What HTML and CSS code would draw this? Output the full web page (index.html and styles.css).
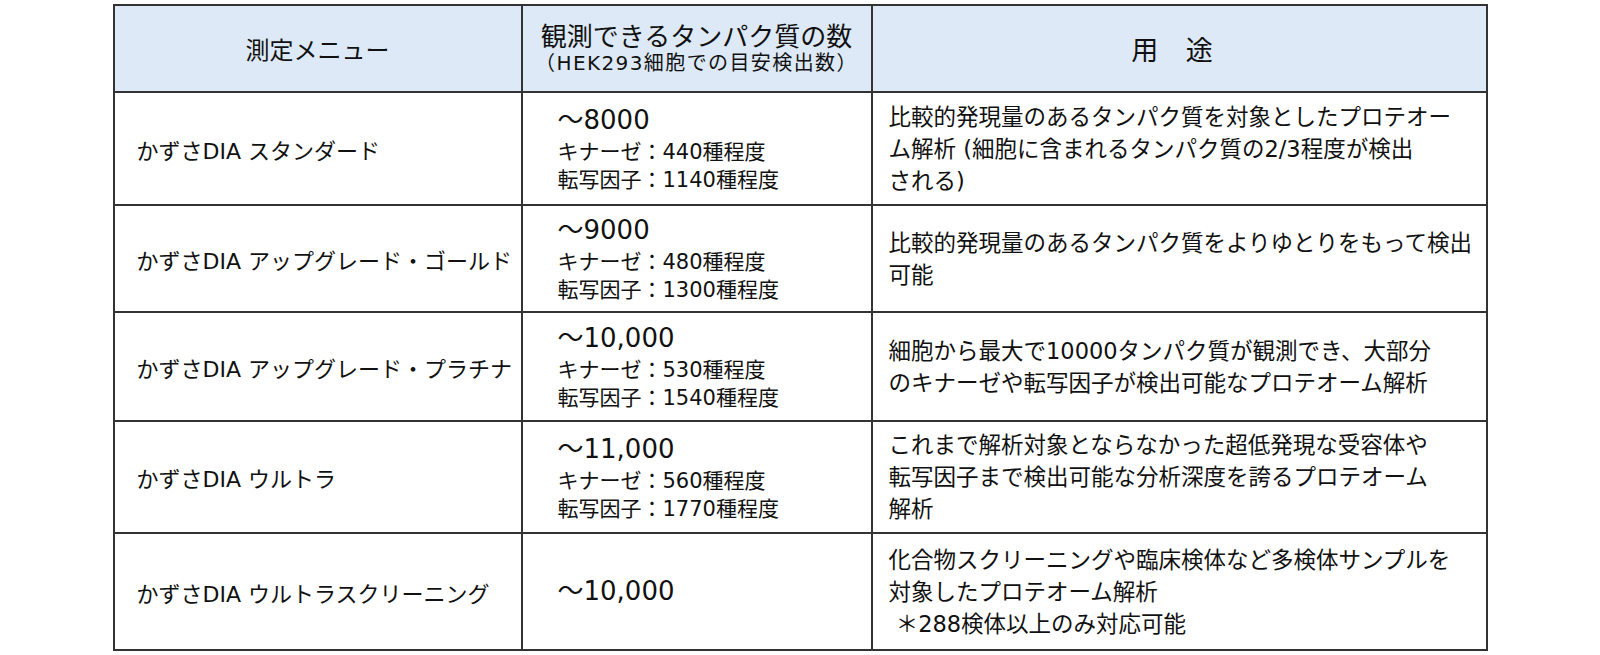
FILE: index.html
```html
<!DOCTYPE html>
<html lang="ja">
<head>
<meta charset="utf-8">
<link rel="stylesheet" href="styles.css">
</head>
<body>
<table class="menu">
  <colgroup>
    <col class="c1"><col class="c2"><col class="c3">
  </colgroup>
  <thead>
    <tr class="head">
      <th>測定メニュー</th>
      <th><div class="ht">観測できるタンパク質の数</div><div class="hs">（HEK293細胞での目安検出数）</div></th>
      <th class="yoto">用 途</th>
    </tr>
  </thead>
  <tbody>
    <tr class="r1">
      <td class="name">かずさDIA スタンダード</td>
      <td class="num"><div class="big">～8000</div><div class="sm">キナーゼ：440種程度</div><div class="sm">転写因子：1140種程度</div></td>
      <td class="use">比較的発現量のあるタンパク質を対象としたプロテオー<br>ム解析 (細胞に含まれるタンパク質の2/3程度が検出<br>される)</td>
    </tr>
    <tr class="r2">
      <td class="name">かずさDIA アップグレード・ゴールド</td>
      <td class="num"><div class="big">～9000</div><div class="sm">キナーゼ：480種程度</div><div class="sm">転写因子：1300種程度</div></td>
      <td class="use">比較的発現量のあるタンパク質をよりゆとりをもって検出<br>可能</td>
    </tr>
    <tr class="r3">
      <td class="name">かずさDIA アップグレード・プラチナ</td>
      <td class="num"><div class="big">～10,000</div><div class="sm">キナーゼ：530種程度</div><div class="sm">転写因子：1540種程度</div></td>
      <td class="use">細胞から最大で10000タンパク質が観測でき、大部分<br>のキナーゼや転写因子が検出可能なプロテオーム解析</td>
    </tr>
    <tr class="r4">
      <td class="name">かずさDIA ウルトラ</td>
      <td class="num"><div class="big">～11,000</div><div class="sm">キナーゼ：560種程度</div><div class="sm">転写因子：1770種程度</div></td>
      <td class="use">これまで解析対象とならなかった超低発現な受容体や<br>転写因子まで検出可能な分析深度を誇るプロテオーム<br>解析</td>
    </tr>
    <tr class="r5">
      <td class="name">かずさDIA ウルトラスクリーニング</td>
      <td class="num"><div class="big">～10,000</div></td>
      <td class="use">化合物スクリーニングや臨床検体など多検体サンプルを<br>対象したプロテオーム解析<br>&nbsp;＊288検体以上のみ対応可能</td>
    </tr>
  </tbody>
</table>
</body>
</html>
```
FILE: styles.css
```css
html, body {
  margin: 0;
  padding: 0;
  background: #ffffff;
}
body {
  padding-top: 4px;
  font-family: "DejaVu Sans", "Noto Sans CJK JP", sans-serif;
  color: #111111;
}
.menu {
  border-collapse: collapse;
  width: 1373px;
  margin: 0 auto;
  table-layout: fixed;
  border: 2px solid #333333;
}
.c1 { width: 408px; }
.c2 { width: 350px; }
.c3 { width: 615px; }
.menu th, .menu td {
  border: 2px solid #333333;
  vertical-align: middle;
  padding: 0;
  white-space: nowrap;
}
.head th {
  background: #dde9f6;
  height: 85px;
  font-weight: normal;
  font-size: 24px;
  text-align: center;
  font-family: "Noto Sans CJK JP", sans-serif;
}
.head th.yoto {
  font-size: 27px;
  word-spacing: 0.8em;
  padding-right: 14px;
}
.ht {
  font-size: 26px;
  line-height: 30px;
}
.hs {
  font-size: 20px;
  line-height: 27px;
  letter-spacing: 1.4px;
  font-family: "DejaVu Sans", "Noto Sans CJK JP", sans-serif;
}
.r1 td { height: 111px; }
.r2 td { height: 105px; }
.r3 td { height: 107px; }
.r4 td { height: 110px; }
.r5 td { height: 115px; }
.name {
  padding-left: 22px !important;
  font-size: 22px;
}
.num {
  padding-left: 35px !important;
}
.big {
  font-size: 26px;
  line-height: 35px;
}
.sm {
  font-size: 21px;
  line-height: 28px;
}
.use {
  padding-left: 16px !important;
  font-size: 22.5px;
  line-height: 32px;
  font-family: "DejaVu Sans", "Noto Sans CJK JP", sans-serif;
}
```
